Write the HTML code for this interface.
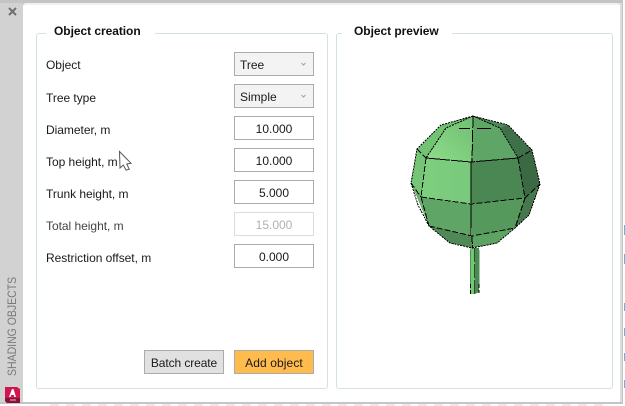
<!DOCTYPE html>
<html><head><meta charset="utf-8"><style>
html,body{margin:0;padding:0}
body{width:625px;height:406px;position:relative;overflow:hidden;background:#fff;font-family:"Liberation Sans",sans-serif;font-size:12px;color:#1a1a1a}
.a{position:absolute}
.l{position:absolute;left:46px;line-height:16px;white-space:nowrap;letter-spacing:-.03px}
.b{position:absolute;box-sizing:border-box;width:80px;height:24px;border:1px solid #ababab;line-height:24px;background:#fff;text-align:center}
.c{background:#f3f3f3;text-align:left;padding-left:5px}
.c svg{position:absolute;right:6px;top:9px}
.g{position:absolute;top:33px;height:356px;box-sizing:border-box;border:1px solid #d3e0e6;border-radius:3px}
.leg{position:absolute;top:23px;height:16px;line-height:16px;background:#fff;font-weight:bold;color:#111;white-space:nowrap;letter-spacing:-.05px}
</style></head><body>
<div class="a" style="left:0;top:0;width:623px;height:404px;background:#c4c4c4"></div>
<div class="a" style="left:0;top:3px;width:23px;height:399px;background:#d2d2d2"></div>
<div class="a" style="left:23px;top:3px;width:598px;height:399px;background:#fff;border-radius:3px 3px 0 0;box-sizing:border-box;border-top:2px solid #f1f1f1"></div>
<div class="a" style="left:620px;top:3px;width:2px;height:399px;background:#dcdcdc"></div>
<svg class="a" style="left:8px;top:7px" width="9" height="9"><path d="M1 1L8 8M8 1L1 8" stroke="#6f6f6f" stroke-width="2"/></svg>
<div class="a" style="left:12px;top:376px;transform-origin:0 0;transform:rotate(-90deg) translateY(-7px) scaleX(.875);font-size:12px;line-height:14px;color:#7a7a7a;white-space:nowrap;width:120px">SHADING OBJECTS</div>
<svg class="a" style="left:5px;top:387px" width="15" height="16"><path d="M0 0H12L15 2V16H2L0 14Z" fill="#d3154f"/><path d="M0 11H15V16H2L0 14Z" fill="#8c0f35"/><path d="M4 10L7 2H8.500L11 10H9.300L8.800 8H6.200L5.600 10Z" fill="#fff"/><path d="M5 13H11" stroke="#e7b9c7" stroke-width="1"/></svg>

<div class="g" style="left:36px;width:292px"></div>
<div class="g" style="left:336px;width:277px"></div>
<div class="leg" style="left:46px;width:109px;padding-left:8px;box-sizing:border-box">Object creation</div>
<div class="leg" style="left:342px;width:110px;padding-left:12px;box-sizing:border-box">Object preview</div>

<div class="l" style="top:57px">Object</div>
<div class="l" style="top:90px">Tree type</div>
<div class="l" style="top:122px">Diameter, m</div>
<div class="l" style="top:154px">Top height, m</div>
<div class="l" style="top:186px">Trunk height, m</div>
<div class="l" style="top:218px;color:#444">Total height, m</div>
<div class="l" style="top:250px">Restriction offset, m</div>

<div class="b c" style="left:234px;top:52px">Tree<svg width="7" height="5"><path d="M1.500 1L3.500 3L5.500 1" fill="none" stroke="#a0a0a0"/></svg></div>
<div class="b c" style="left:234px;top:84px">Simple<svg width="7" height="5"><path d="M1.500 1L3.500 3L5.500 1" fill="none" stroke="#a0a0a0"/></svg></div>
<div class="b" style="left:234px;top:116px">10.000</div>
<div class="b" style="left:234px;top:148px">10.000</div>
<div class="b" style="left:234px;top:180px">5.000</div>
<div class="b" style="left:234px;top:212px;border-color:#dcdcdc;color:#b0b0b0">15.000</div>
<div class="b" style="left:234px;top:244px">0.000</div>
<div class="b" style="left:144px;top:350px;background:#e1e1e1;letter-spacing:-.1px">Batch create</div>
<div class="b" style="left:234px;top:350px;background:#ffbb4d;letter-spacing:.1px">Add object</div>

<svg class="a" style="left:118px;top:150px" width="16" height="24"><path d="M1.500 1.500L2 18L5.300 15L8 20L11.300 19.300L8.700 14L13 13.300Z" fill="#fff" stroke="#555" stroke-width="1"/></svg>

<svg class="a" style="left:400px;top:105px" width="150" height="200" viewBox="400 105 150 200">
<defs>
<linearGradient id="tl" x1="0" y1="1" x2="1" y2="0"><stop offset="0" stop-color="#8edc8b"/><stop offset="1" stop-color="#70bf72"/></linearGradient>
<linearGradient id="ml" x1="0" y1="0" x2="1" y2="0"><stop offset="0" stop-color="#7fcf80"/><stop offset="1" stop-color="#78c97c"/></linearGradient>
</defs>
<g shape-rendering="crispEdges">
<path d="M473 116L446 128L426 158L471 162Z" fill="url(#tl)"/>
<path d="M473 116L500 128L518 158L471 162Z" fill="#5fa566"/>
<path d="M473 116L508 125L500 128Z" fill="#4f8a55"/>
<path d="M473 116L441 125L446 128Z" fill="#6cbd6e"/>
<path d="M441 125L417 149L426 158L446 128Z" fill="#71c473"/>
<path d="M417 149L411 183L421 197L426 158Z" fill="#74c576"/>
<path d="M426 158L471 162V204L421 197Z" fill="url(#ml)"/>
<path d="M471 162L518 158L525 198L471 204Z" fill="#4b8752"/>
<path d="M500 128L508 125L532 150L518 158Z" fill="#40704a"/>
<path d="M518 158L532 150L540 184L525 198Z" fill="#3b6a42"/>
<path d="M411 183L421 197L429 226Z" fill="#68b26c"/>
<path d="M421 197L471 204V236L429 226Z" fill="#5fa565"/>
<path d="M471 204L525 198L515 228L472 236Z" fill="#559a5c"/>
<path d="M525 198L540 184L529 215L515 228Z" fill="#45784c"/>
<path d="M429 226L472 236V248L450 243Z" fill="#4f8a56"/>
<path d="M472 236L515 228L497 243L472 248Z" fill="#5da364"/>
<path d="M470 248H475V294H470Z" fill="#74c777"/>
<path d="M475 248H479V292L475 294Z" fill="#4c8a53"/>
</g>
<g fill="none" stroke="#000" stroke-width="1" shape-rendering="crispEdges">
<path d="M471 162V203M471 204V236"/>
<path d="M473 116L472 162" stroke-dasharray="12 2"/>
<path d="M426 158L471 162L518 158" stroke-dasharray="24 1"/>
<path d="M459 128.500H470M477 128.500H491"/>
<path d="M472 236L472.500 248" stroke-dasharray="8 1"/>
<path d="M474.500 248V294" stroke="#24502b" stroke-dasharray="14 2"/>
<g stroke-dasharray="2 1">
<path d="M473 116L441 125L417 149L411 183L418 205L429 226L450 243L472 248L497 243L515 228L529 215L540 184L532 150L508 125L473 116"/>
<path d="M473 116L446 128L426 158M473 116L500 128L518 158"/>
</g>
<g stroke-dasharray="6 2">
<path d="M426 158L421 197L429 226"/>
<path d="M518 158L525 198L515 228"/>
<path d="M417 149L426 158M518 158L532 150M411 183L421 197M525 198L540 184"/>
<path d="M421 197L471 204L525 198"/>
<path d="M429 226L472 236L515 228"/>
</g>
<path d="M470.500 284V294M479 284V293" stroke-dasharray="4 2"/>
<path d="M470.500 250V284M479 250V284" stroke="#4f8f55"/>
</g>
</svg>

<div class="a" style="left:624px;top:225px;width:1px;height:10px;background:#58b7de"></div>
<div class="a" style="left:624px;top:254px;width:1px;height:10px;background:#58b7de"></div>
<div class="a" style="left:624px;top:303px;width:1px;height:8px;background:#58b7de"></div>
<div class="a" style="left:624px;top:328px;width:1px;height:8px;background:#58b7de"></div>
<div class="a" style="left:624px;top:353px;width:1px;height:8px;background:#58b7de"></div>
<div class="a" style="left:624px;top:380px;width:1px;height:8px;background:#58b7de"></div>
<div class="a" style="left:50px;top:404px;width:560px;height:2px;background:repeating-linear-gradient(90deg,#f1e6e8 0 9px,#fff 9px 16px)"></div>
</body></html>
